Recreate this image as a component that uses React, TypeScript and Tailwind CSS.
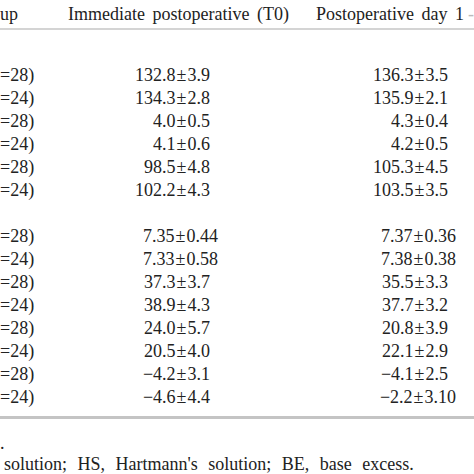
import React from "react";

type Row = { label: string; t0: string; d1: string; wide0?: boolean; wide1?: boolean } | null;

const rows: Row[] = [
  null,
  { label: "=28)", t0: "132.8\u00b13.9", d1: "136.3\u00b13.5" },
  { label: "=24)", t0: "134.3\u00b12.8", d1: "135.9\u00b12.1" },
  { label: "=28)", t0: "4.0\u00b10.5", d1: "4.3\u00b10.4" },
  { label: "=24)", t0: "4.1\u00b10.6", d1: "4.2\u00b10.5" },
  { label: "=28)", t0: "98.5\u00b14.8", d1: "105.3\u00b14.5" },
  { label: "=24)", t0: "102.2\u00b14.3", d1: "103.5\u00b13.5" },
  null,
  { label: "=28)", t0: "7.35\u00b10.44", d1: "7.37\u00b10.36", wide0: true, wide1: true },
  { label: "=24)", t0: "7.33\u00b10.58", d1: "7.38\u00b10.38", wide0: true, wide1: true },
  { label: "=28)", t0: "37.3\u00b13.7", d1: "35.5\u00b13.3" },
  { label: "=24)", t0: "38.9\u00b14.3", d1: "37.7\u00b13.2" },
  { label: "=28)", t0: "24.0\u00b15.7", d1: "20.8\u00b13.9" },
  { label: "=24)", t0: "20.5\u00b14.0", d1: "22.1\u00b12.9" },
  { label: "=28)", t0: "\u22124.2\u00b13.1", d1: "\u22124.1\u00b12.5" },
  { label: "=24)", t0: "\u22124.6\u00b14.4", d1: "\u22122.2\u00b13.10", wide1: true },
];

function Value({ v }: { v: string }) {
  const [a, b] = v.split("\u00b1");
  return (
    <>
      {a}
      <span className="mx-[1px]">{"\u00b1"}</span>
      {b}
    </>
  );
}

export default function App() {
  return (
    <div
      className="h-[474px] w-[474px] overflow-hidden bg-white text-[18px] leading-[23px] text-[#222]"
      style={{ fontFamily: '"Liberation Serif", "Times New Roman", serif' }}
    >
      {/* Header */}
      <div className="flex h-[30px] items-center border-b-2 border-[#d4d4d4] whitespace-nowrap [word-spacing:3px]">
        <span className="w-[68px]">up</span>
        <span className="w-[248px]">Immediate postoperative (T0)</span>
        <span className="w-[152px]">Postoperative day 1</span>
        <span className="text-[#bbb]">-</span>
      </div>

      {/* Body */}
      <div className="border-b-[3px] border-[#c4c4c4] pt-[11px] pb-[7px]">
        {rows.map((r, i) =>
          r ? (
            <div key={i} className="flex h-[23px] items-center whitespace-nowrap">
              <span className="w-[60px]">{r.label}</span>
              <span className={r.wide0 ? "w-[158px] text-right" : "w-[150px] text-right"}>
                <Value v={r.t0} />
              </span>
              <span className={r.wide0 ? "w-[238px] text-right" : "w-[246px] text-right"}>
                <span className={r.wide1 ? "" : "mr-[8px]"}>
                  <Value v={r.d1} />
                </span>
              </span>
            </div>
          ) : (
            <div key={i} className="h-[23px]" />
          ),
        )}
      </div>

      {/* Footnote */}
      <div className="pt-[13px] whitespace-nowrap">
        <div className="h-[22px] leading-[22px]">.</div>
        <div className="h-[20px] pl-[4px] leading-[20px] [word-spacing:6px]">
          solution; HS, Hartmann's solution; BE, base excess.
        </div>
      </div>
    </div>
  );
}
